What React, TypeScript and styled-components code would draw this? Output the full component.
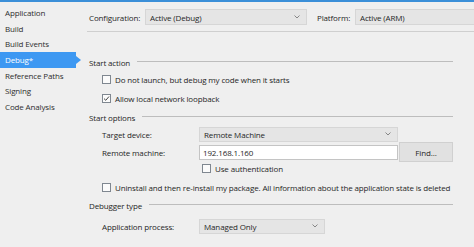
import React from "react";
import styled, { createGlobalStyle } from "styled-components";

const GlobalStyle = createGlobalStyle`
  html, body {
    margin: 0;
    padding: 0;
    background: #efefef;
  }
  body {
    font-family: "Open Sans", "Noto Sans", sans-serif;
    font-size: 8px;
    letter-spacing: -0.14px;
    color: #262626;
  }
`;

const Page = styled.div`
  width: 474px;
  height: 247px;
  overflow: hidden;
  background: #efefef;
  border-top: 2px solid #3b8fd8;
  box-sizing: border-box;
  display: flex;
`;

const Sidebar = styled.div`
  width: 80px;
  flex: none;
  padding-top: 3px;
  display: flex;
  flex-direction: column;
`;

const NavItem = styled.div<{ $active?: boolean }>`
  position: relative;
  height: 15.7px;
  line-height: 15.7px;
  width: 76px;
  padding-left: 5px;
  box-sizing: border-box;
  color: ${(p) => (p.$active ? "#ffffff" : "#2e2e2e")};
  background: ${(p) => (p.$active ? "#3d98f2" : "transparent")};
  white-space: nowrap;

  &::after {
    content: "";
    display: ${(p) => (p.$active ? "block" : "none")};
    position: absolute;
    right: -5px;
    top: 3.5px;
    border-left: 5px solid #3d98f2;
    border-top: 4.5px solid transparent;
    border-bottom: 4.5px solid transparent;
  }
`;

const Main = styled.div`
  flex: 1;
  min-width: 0;
  display: flex;
  flex-direction: column;
`;

const ConfigRow = styled.div`
  margin-top: 7px;
  height: 16px;
  padding-left: 9px;
  display: flex;
  align-items: center;
  white-space: nowrap;
`;

const ConfigLabel = styled.span<{ $w: number; $gap?: number }>`
  width: ${(p) => p.$w}px;
  margin-left: ${(p) => p.$gap ?? 0}px;
  flex: none;
`;

const Select = styled.div<{ $w: number; $h?: number }>`
  width: ${(p) => p.$w}px;
  height: ${(p) => p.$h ?? 15}px;
  flex: none;
  box-sizing: border-box;
  background: #e5e5e5;
  border: 1px solid #d6d6d6;
  padding: 0 6px 0 4px;
  display: flex;
  align-items: center;
  justify-content: space-between;
  white-space: nowrap;
  overflow: hidden;
`;

const Chevron = () => (
  <svg width="6" height="4" viewBox="0 0 6 4">
    <path d="M0.5 0.5 L3 3 L5.5 0.5" fill="none" stroke="#7a7a7a" strokeWidth="0.9" />
  </svg>
);

const TopSeparator = styled.div`
  margin-top: 6px;
  margin-left: 7px;
  height: 1px;
  background: #cfcfcf;
`;

const Body = styled.div`
  padding: 0 21px 0 9px;
  display: flex;
  flex-direction: column;
`;

const Row = styled.div<{ $top?: number; $h: number; $indent?: number }>`
  margin-top: ${(p) => p.$top ?? 0}px;
  height: ${(p) => p.$h}px;
  padding-left: ${(p) => p.$indent ?? 0}px;
  display: flex;
  align-items: center;
  white-space: nowrap;
`;

const SectionLine = styled.div<{ $gap: number }>`
  flex: 1;
  height: 1px;
  background: #bdbdbd;
  margin-left: ${(p) => p.$gap}px;
  margin-top: -2px;
`;

const Box = styled.span`
  width: 9px;
  height: 9px;
  box-sizing: border-box;
  border: 1px solid #7f8790;
  background: #fbfbfb;
  margin-right: 4px;
  flex: none;
  display: flex;
  align-items: center;
  justify-content: center;
`;

const FieldLabel = styled.span`
  width: 97px;
  flex: none;
`;

const Input = styled.div`
  width: 199px;
  height: 15px;
  box-sizing: border-box;
  background: #ffffff;
  border: 1px solid #c4c4c4;
  padding-left: 3px;
  display: flex;
  align-items: center;
  flex: none;
`;

const Button = styled.div`
  width: 54px;
  height: 20px;
  margin-left: 1px;
  box-sizing: border-box;
  background: #e1e1e1;
  border: 1px solid #d0d0d0;
  display: flex;
  align-items: center;
  justify-content: center;
  flex: none;
`;

const Check = ({ checked }: { checked?: boolean }) => (
  <Box>
    {checked && (
      <svg width="7" height="7" viewBox="0 0 7 7">
        <path d="M1 3.6 L2.8 5.3 L6 1.5" fill="none" stroke="#333" strokeWidth="0.9" />
      </svg>
    )}
  </Box>
);

const navItems = [
  "Application",
  "Build",
  "Build Events",
  "Debug*",
  "Reference Paths",
  "Signing",
  "Code Analysis",
];

export default function App() {
  return (
    <>
      <GlobalStyle />
      <Page>
        <Sidebar>
          {navItems.map((n) => (
            <NavItem key={n} $active={n === "Debug*"}>
              {n}
            </NavItem>
          ))}
        </Sidebar>
        <Main>
          <ConfigRow>
            <ConfigLabel $w={56}>Configuration:</ConfigLabel>
            <Select $w={162} $h={16}>
              <span>Active (Debug)</span>
              <Chevron />
            </Select>
            <ConfigLabel $w={38} $gap={10}>
              Platform:
            </ConfigLabel>
            <Select $w={140} $h={16}>
              <span>Active (ARM)</span>
            </Select>
          </ConfigRow>
          <TopSeparator />
          <Body>
            <Row $top={22} $h={16}>
              <span>Start action</span>
              <SectionLine $gap={7} />
            </Row>
            <Row $h={18} $indent={13}>
              <Check />
              <span>Do not launch, but debug my code when it starts</span>
            </Row>
            <Row $h={20} $indent={13}>
              <Check checked />
              <span>Allow local network loopback</span>
            </Row>
            <Row $h={18}>
              <span>Start options</span>
              <SectionLine $gap={7} />
            </Row>
            <Row $h={16} $indent={13}>
              <FieldLabel>Target device:</FieldLabel>
              <Select $w={199}>
                <span>Remote Machine</span>
                <Chevron />
              </Select>
            </Row>
            <Row $h={20} $indent={13}>
              <FieldLabel>Remote machine:</FieldLabel>
              <Input>192.168.1.160</Input>
              <Button>Find...</Button>
            </Row>
            <Row $h={13} $indent={113}>
              <Check />
              <span>Use authentication</span>
            </Row>
            <Row $h={24} $indent={13}>
              <Check />
              <span>
                Uninstall and then re-install my package. All information about the application state
                is deleted
              </span>
            </Row>
            <Row $h={13}>
              <span>Debugger type</span>
              <SectionLine $gap={7} />
            </Row>
            <Row $h={28} $indent={13}>
              <FieldLabel>Application process:</FieldLabel>
              <Select $w={126}>
                <span>Managed Only</span>
                <Chevron />
              </Select>
            </Row>
          </Body>
        </Main>
      </Page>
    </>
  );
}
